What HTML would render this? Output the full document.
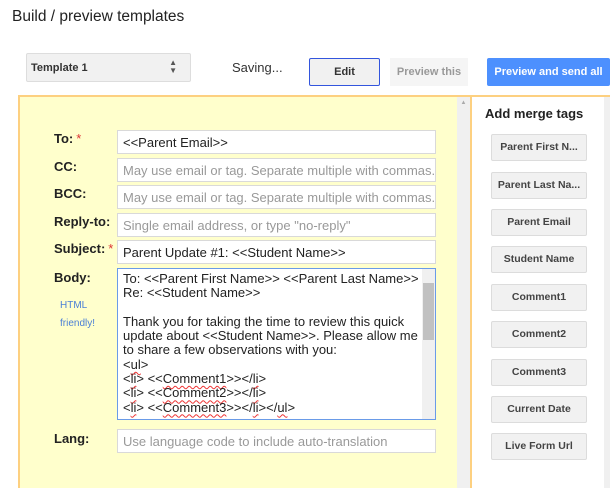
<!DOCTYPE html>
<html><head><style>
*{box-sizing:border-box;margin:0;padding:0}
body{width:610px;height:488px;overflow:hidden;background:#fff;font-family:"Liberation Sans",Arial,sans-serif;position:relative;color:#222}
.a{position:absolute}
.lbl{position:absolute;left:54px;font-weight:bold;font-size:13px;color:#222}
.req{color:#d33;font-weight:normal;margin-left:3px}
.in{position:absolute;left:117px;width:319px;height:24px;background:#fff;border:1px solid #d9d9d9;font-size:13px;padding:4px 5px;white-space:nowrap;overflow:hidden;color:#222}
.ph{color:#999}
.tb{position:absolute;left:491px;width:96px;height:27px;background:#f1f1f1;border:1px solid #dcdcdc;border-radius:2px;font-size:10.5px;font-weight:bold;color:#444;text-align:center;line-height:25px;white-space:nowrap}
.sp{text-decoration:underline wavy #e33;text-decoration-thickness:1px;text-underline-offset:2px}
</style></head><body>
<div class="a" style="left:12px;top:8px;font-size:15.5px;color:#222">Build / preview templates</div>
<div class="a" style="left:26px;top:53px;width:165px;height:29px;background:#f1f1f1;border:1px solid #ddd;border-radius:2px;font-size:11px;font-weight:bold;padding:8px 4px;color:#333">Template 1<span style="position:absolute;right:13px;top:5px;font-size:8px;line-height:8px;color:#555">▲<br>▼</span></div>
<div class="a" style="left:232px;top:60px;font-size:13px;color:#333">Saving...</div>
<div class="a" style="left:309px;top:58px;width:71px;height:28px;border:1px solid #3355dd;border-radius:2px;background:#f1f1f1;font-size:11px;font-weight:bold;text-align:center;line-height:26px;color:#333">Edit</div>
<div class="a" style="left:390px;top:58px;width:78px;height:28px;background:#f5f5f5;font-size:11px;font-weight:bold;text-align:center;line-height:28px;color:#999">Preview this</div>
<div class="a" style="left:487px;top:58px;width:123px;height:28px;background:#4d90fe;border-radius:2px;font-size:11px;font-weight:bold;text-align:center;line-height:28px;color:#fff">Preview and send all</div>

<div class="a" style="left:18px;top:95px;width:454px;height:393px;background:#ffffcc;border-left:2px solid #fdd080;border-top:2px solid #fdd080"></div>
<div class="a" style="left:457px;top:97px;width:13px;height:391px;background:#f0f0f0"><div style="font-size:6px;color:#aaa;text-align:center;margin-top:3px">▲</div></div>
<div class="a" style="left:470px;top:95px;width:2px;height:393px;background:#fdd080"></div>
<div class="a" style="left:472px;top:95px;width:138px;height:2px;background:#fdd080"></div>
<div class="a" style="left:604px;top:97px;width:6px;height:391px;background:#f0f0f0"></div>

<div class="lbl" style="top:131px">To:<span class="req">*</span></div>
<div class="in" style="top:130px">&lt;&lt;Parent Email&gt;&gt;</div>
<div class="lbl" style="top:159px">CC:</div>
<div class="in ph" style="top:158px">May use email or tag. Separate multiple with commas.</div>
<div class="lbl" style="top:186px">BCC:</div>
<div class="in ph" style="top:185px">May use email or tag. Separate multiple with commas.</div>
<div class="lbl" style="top:214px">Reply-to:</div>
<div class="in ph" style="top:213px">Single email address, or type "no-reply"</div>
<div class="lbl" style="top:241px">Subject:<span class="req">*</span></div>
<div class="in" style="top:240px">Parent Update #1: &lt;&lt;Student Name&gt;&gt;</div>
<div class="lbl" style="top:270px">Body:</div>
<div class="a" style="left:60px;top:297px;font-size:10px;color:#4a7fd6;line-height:18px">HTML<br>friendly!</div>
<div class="a" style="left:117px;top:268px;width:319px;height:152px;background:#fff;border:1px solid #6a9be8;overflow:hidden">
<div style="padding:3px 5px;font-size:13px;line-height:14.3px;color:#222;white-space:nowrap">To: &lt;&lt;Parent First Name&gt;&gt; &lt;&lt;Parent Last Name&gt;&gt;<br>Re: &lt;&lt;Student Name&gt;&gt;<br><br>Thank you for taking the time to review this quick<br>update about &lt;&lt;Student Name&gt;&gt;. Please allow me<br>to share a few observations with you:<br>&lt;<span class="sp">ul</span>&gt;<br>&lt;<span class="sp">li</span>&gt; &lt;&lt;<span class="sp">Comment1</span>&gt;&gt;&lt;/<span class="sp">li</span>&gt;<br>&lt;<span class="sp">li</span>&gt; &lt;&lt;<span class="sp">Comment2</span>&gt;&gt;&lt;/<span class="sp">li</span>&gt;<br>&lt;<span class="sp">li</span>&gt; &lt;&lt;<span class="sp">Comment3</span>&gt;&gt;&lt;/<span class="sp">li</span>&gt;&lt;/<span class="sp">ul</span>&gt;</div>
<div style="position:absolute;right:0;top:0;width:13px;height:150px;background:#f0f0f0"><div style="margin:14px 1px 0;height:57px;background:#c1c1c1"></div></div>
</div>
<div class="lbl" style="top:431px">Lang:</div>
<div class="in ph" style="top:429px">Use language code to include auto-translation</div>

<div class="a" style="left:485px;top:106px;font-size:13px;font-weight:bold;color:#222">Add merge tags</div>
<div class="tb" style="top:134px">Parent First N...</div>
<div class="tb" style="top:172px">Parent Last Na...</div>
<div class="tb" style="top:209px">Parent Email</div>
<div class="tb" style="top:246px">Student Name</div>
<div class="tb" style="top:284px">Comment1</div>
<div class="tb" style="top:321px">Comment2</div>
<div class="tb" style="top:359px">Comment3</div>
<div class="tb" style="top:396px">Current Date</div>
<div class="tb" style="top:433px">Live Form Url</div>
</body></html>
